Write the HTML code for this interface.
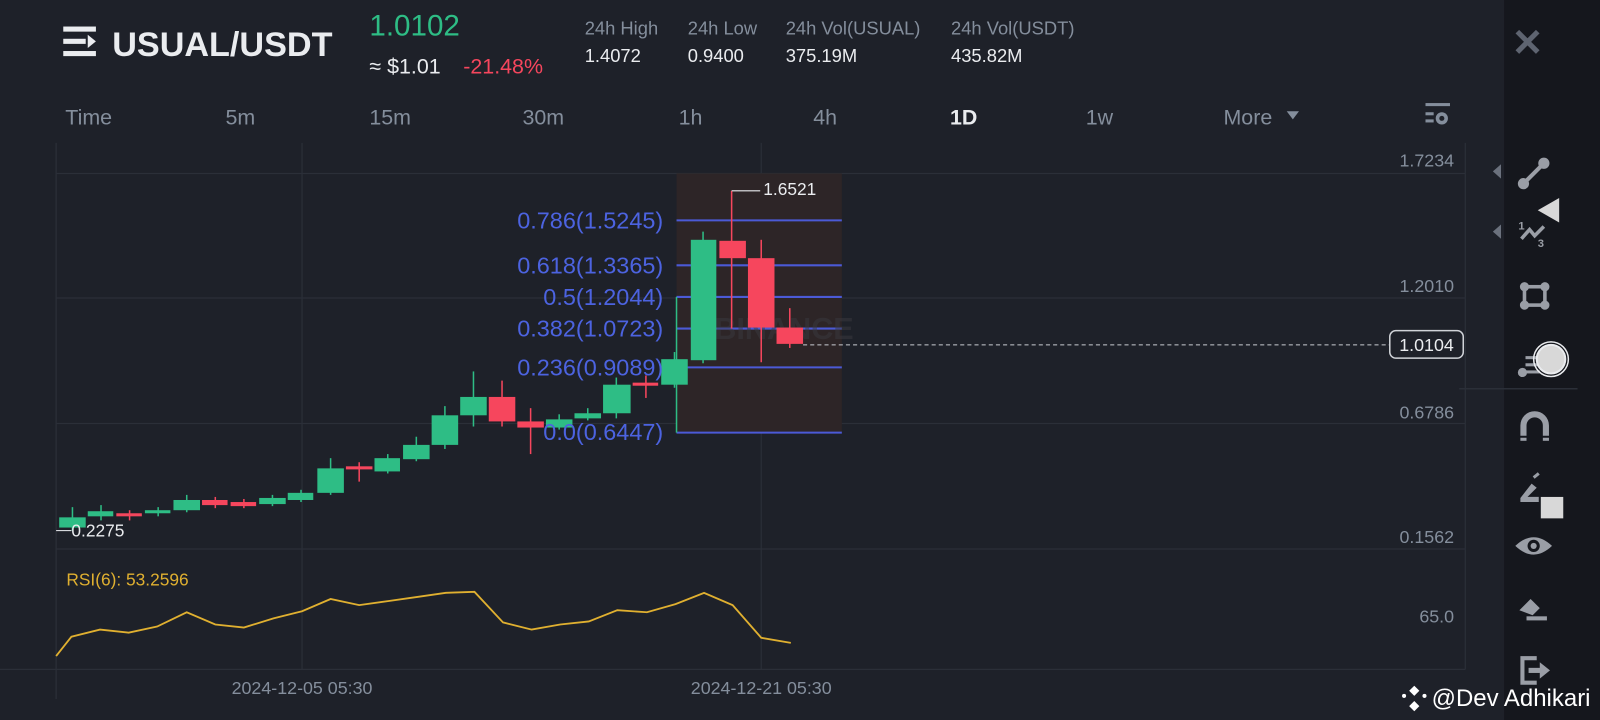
<!DOCTYPE html>
<html><head><meta charset="utf-8"><style>
html,body{margin:0;padding:0;background:#1e2129;width:1600px;height:720px;overflow:hidden}
svg{display:block}
text{font-family:"Liberation Sans",sans-serif}
</style></head><body>
<svg width="1600" height="720" viewBox="0 0 1600 720" xmlns="http://www.w3.org/2000/svg">
<rect width="1600" height="720" fill="#1e2129"/>
<g transform="scale(1.0204)">
<rect x="1474" y="0" width="120" height="720" fill="#15171d"/>
<g fill="#eaecef"><rect x="62" y="26" width="32" height="5"/><rect x="62" y="38" width="22" height="5"/><rect x="62" y="50" width="32" height="5"/><polygon points="86,34 94,40.5 86,47"/></g>
<text x="110" y="55" font-size="33.5" font-weight="bold" fill="#eaecef">USUAL/USDT</text>
<text x="362" y="35" font-size="29" fill="#2ebd85">1.0102</text>
<text x="362" y="72" font-size="21" fill="#eaecef">≈ $1.01</text>
<text x="454" y="72" font-size="21" fill="#f6465d">-21.48%</text>
<g font-size="18" fill="#848e9c"><text x="573" y="34">24h High</text><text x="674" y="34">24h Low</text><text x="770" y="34">24h Vol(USUAL)</text><text x="932" y="34">24h Vol(USDT)</text></g>
<g font-size="18" fill="#eaecef"><text x="573" y="61">1.4072</text><text x="674" y="61">0.9400</text><text x="770" y="61">375.19M</text><text x="932" y="61">435.82M</text></g>
<path d="M1487 31 L1507 51 M1507 31 L1487 51" stroke="#5e6470" stroke-width="5"/>
<g font-size="21" fill="#848e9c"><text x="64" y="122">Time</text><text x="221" y="122">5m</text><text x="362" y="122">15m</text><text x="512" y="122">30m</text><text x="665" y="122">1h</text><text x="797" y="122">4h</text><text x="1064" y="122">1w</text><text x="1199" y="122">More</text></g>
<text x="931" y="122" font-size="21" font-weight="bold" fill="#eaecef">1D</text>
<polygon points="1261,109 1273,109 1267,117" fill="#848e9c"/>
<g fill="#848e9c"><rect x="1397" y="101" width="24" height="3"/><rect x="1397" y="110" width="8" height="3"/><rect x="1397" y="117" width="8" height="3"/><circle cx="1413" cy="116" r="6"/><circle cx="1413" cy="116" r="2.5" fill="#1e2129"/></g>
<g stroke="#2b2f38" stroke-width="1.2">
<line x1="55" y1="140" x2="55" y2="685"/><line x1="296" y1="140" x2="296" y2="656"/><line x1="746" y1="140" x2="746" y2="656"/><line x1="1436" y1="140" x2="1436" y2="656"/>
<line x1="55" y1="170" x2="1436" y2="170"/><line x1="55" y1="292" x2="1436" y2="292"/><line x1="55" y1="415" x2="1436" y2="415"/><line x1="55" y1="538" x2="1436" y2="538"/><line x1="0" y1="656" x2="1436" y2="656"/>
</g>
<g font-size="17.5" fill="#848e9c" text-anchor="end"><text x="1425" y="163">1.7234</text><text x="1425" y="286">1.2010</text><text x="1425" y="410">0.6786</text><text x="1425" y="532">0.1562</text><text x="1425" y="610">65.0</text></g>
<g font-size="17.5" fill="#848e9c" text-anchor="middle"><text x="296" y="680">2024-12-05 05:30</text><text x="746" y="680">2024-12-21 05:30</text></g>
<rect x="663" y="170" width="162" height="254" fill="#2d2527"/>
<g stroke="#4b5ad6" stroke-width="2"><line x1="663" y1="216" x2="825" y2="216"/><line x1="663" y1="260" x2="825" y2="260"/><line x1="663" y1="291" x2="825" y2="291"/><line x1="663" y1="322" x2="825" y2="322"/><line x1="663" y1="360" x2="825" y2="360"/><line x1="663" y1="424" x2="825" y2="424"/></g>
<line x1="663" y1="291" x2="663" y2="424" stroke="#2ebd85" stroke-width="1.5"/>
<text x="700" y="332" font-size="30" font-weight="bold" fill="#3a3a40" opacity="0.5">BINANCE</text>
<g stroke-width="1.5">
<line x1="71" y1="497" x2="71" y2="520" stroke="#2ebd85"/><rect x="58" y="507" width="26" height="10" fill="#2ebd85"/>
<line x1="99" y1="495" x2="99" y2="510" stroke="#2ebd85"/><rect x="86" y="501" width="25" height="5" fill="#2ebd85"/>
<line x1="127" y1="500" x2="127" y2="510" stroke="#f6465d"/><rect x="114" y="503" width="25" height="3" fill="#f6465d"/>
<line x1="155" y1="497" x2="155" y2="506" stroke="#2ebd85"/><rect x="142" y="500" width="25" height="3" fill="#2ebd85"/>
<line x1="183" y1="485" x2="183" y2="502" stroke="#2ebd85"/><rect x="170" y="490" width="26" height="10" fill="#2ebd85"/>
<line x1="211" y1="487" x2="211" y2="498" stroke="#f6465d"/><rect x="198" y="490" width="25" height="5" fill="#f6465d"/>
<line x1="239" y1="489" x2="239" y2="498" stroke="#f6465d"/><rect x="226" y="492" width="25" height="4" fill="#f6465d"/>
<line x1="267" y1="485" x2="267" y2="496" stroke="#2ebd85"/><rect x="254" y="488" width="26" height="6" fill="#2ebd85"/>
<line x1="295" y1="480" x2="295" y2="492" stroke="#2ebd85"/><rect x="282" y="483" width="25" height="7" fill="#2ebd85"/>
<line x1="324" y1="449" x2="324" y2="485" stroke="#2ebd85"/><rect x="311" y="459" width="26" height="24" fill="#2ebd85"/>
<line x1="352" y1="453" x2="352" y2="472" stroke="#f6465d"/><rect x="339" y="457" width="26" height="3" fill="#f6465d"/>
<line x1="380" y1="445" x2="380" y2="464" stroke="#2ebd85"/><rect x="367" y="449" width="25" height="13" fill="#2ebd85"/>
<line x1="408" y1="428" x2="408" y2="452" stroke="#2ebd85"/><rect x="395" y="436" width="26" height="14" fill="#2ebd85"/>
<line x1="436" y1="398" x2="436" y2="440" stroke="#2ebd85"/><rect x="423" y="407" width="26" height="29" fill="#2ebd85"/>
<line x1="464" y1="364" x2="464" y2="418" stroke="#2ebd85"/><rect x="451" y="389" width="26" height="18" fill="#2ebd85"/>
<line x1="492" y1="373" x2="492" y2="418" stroke="#f6465d"/><rect x="479" y="389" width="26" height="24" fill="#f6465d"/>
<line x1="520" y1="400" x2="520" y2="445" stroke="#f6465d"/><rect x="507" y="413" width="26" height="6" fill="#f6465d"/>
<line x1="548" y1="406" x2="548" y2="421" stroke="#2ebd85"/><rect x="535" y="411" width="26" height="8" fill="#2ebd85"/>
<line x1="576" y1="400" x2="576" y2="412" stroke="#2ebd85"/><rect x="563" y="405" width="26" height="5" fill="#2ebd85"/>
<line x1="604" y1="370" x2="604" y2="410" stroke="#2ebd85"/><rect x="591" y="377" width="27" height="28" fill="#2ebd85"/>
<line x1="633" y1="368" x2="633" y2="390" stroke="#f6465d"/><rect x="620" y="375" width="25" height="3" fill="#f6465d"/>
<line x1="661" y1="345" x2="661" y2="380" stroke="#2ebd85"/><rect x="648" y="352" width="26" height="25" fill="#2ebd85"/>
<line x1="689" y1="227" x2="689" y2="356" stroke="#2ebd85"/><rect x="677" y="235" width="25" height="118" fill="#2ebd85"/>
<line x1="717" y1="187" x2="717" y2="322" stroke="#f6465d"/><rect x="705" y="236" width="26" height="17" fill="#f6465d"/>
<line x1="746" y1="235" x2="746" y2="355" stroke="#f6465d"/><rect x="733" y="253" width="26" height="68" fill="#f6465d"/>
<line x1="774" y1="302" x2="774" y2="341" stroke="#f6465d"/><rect x="761" y="321" width="26" height="16" fill="#f6465d"/>
</g>
<path d="M717 187 H745" stroke="#eaecef" stroke-width="1"/>
<text x="748" y="191" font-size="17" fill="#eaecef">1.6521</text>
<path d="M55 520 H70" stroke="#eaecef" stroke-width="1"/>
<text x="70" y="526" font-size="17" fill="#eaecef">0.2275</text>
<g font-size="23" fill="#4c63e0" text-anchor="end"><text x="650" y="224">0.786(1.5245)</text><text x="650" y="268">0.618(1.3365)</text><text x="650" y="299">0.5(1.2044)</text><text x="650" y="330">0.382(1.0723)</text><text x="650" y="368">0.236(0.9089)</text><text x="650" y="431">0.0(0.6447)</text></g>
<line x1="787" y1="338" x2="1362" y2="338" stroke="#c9ccd2" stroke-width="1" stroke-dasharray="4,3"/>
<rect x="1362" y="324" width="72" height="27" rx="6" fill="#1e2129" stroke="#d0d3d8" stroke-width="1.5"/>
<text x="1398" y="344" font-size="17.5" fill="#eaecef" text-anchor="middle">1.0104</text>
<text x="65" y="574" font-size="17" fill="#e0b030">RSI(6): 53.2596</text>
<polyline fill="none" stroke="#e0b030" stroke-width="1.8" points="55,643 70,624 98,617 126,620 154,614 183,600 211,612 239,615 268,606 296,599 324,587 352,593 381,589 409,585 437,581 465,580 493,610 521,617 549,612 577,609 605,598 634,600 662,592 690,581 718,593 746,625 775,630"/>
<g fill="#6b717d"><polygon points="1471,161 1471,175 1463,168"/><polygon points="1471,220 1471,234 1463,227"/></g>
<line x1="1430" y1="381" x2="1546" y2="381" stroke="#2b2f38" stroke-width="1.5"/>
<g fill="#9a9ea6" stroke="#9a9ea6">
<circle cx="1493" cy="180" r="5"/><circle cx="1513" cy="160" r="5"/><line x1="1493" y1="180" x2="1513" y2="160" stroke-width="4"/>
<path d="M1491 234 L1499 225 L1504 231 L1513 222" fill="none" stroke-width="3.5"/>
<text x="1488" y="225" font-size="11" font-weight="bold" stroke="none">1</text><text x="1507" y="242" font-size="11" font-weight="bold" stroke="none">3</text>
<rect x="1494" y="281" width="20" height="18" fill="none" stroke-width="3.5"/><circle cx="1494" cy="281" r="4"/><circle cx="1514" cy="281" r="4"/><circle cx="1494" cy="299" r="4"/><circle cx="1514" cy="299" r="4"/>
<circle cx="1492" cy="365" r="4"/><rect x="1495" y="349" width="14" height="3" stroke="none"/><rect x="1495" y="356" width="14" height="3" stroke="none"/><rect x="1495" y="363" width="14" height="3" stroke="none"/>
<path d="M1490 427 V417 A14 14 0 0 1 1518 417 V427 H1512 V417 A8 8 0 0 0 1496 417 V427 Z" stroke="none"/>
<rect x="1490" y="429" width="6" height="3" stroke="none"/><rect x="1512" y="429" width="6" height="3" stroke="none"/>
<path d="M1490 488 L1501 474 L1506 478 L1497 487 L1508 487 L1508 492 L1490 492 Z" stroke="none"/><path d="M1503 468 L1508 464" stroke-width="3"/>
<path d="M1485 535 Q1503 518 1521 535 Q1503 552 1485 535 Z" stroke="none"/><circle cx="1503" cy="535" r="6" fill="#15171d" stroke="none"/><circle cx="1503" cy="535" r="3" stroke="none"/>
<path d="M1489 598 L1500 587 L1509 596 L1502 603 Z" stroke="none"/><rect x="1496" y="604" width="20" height="4" stroke="none"/>
<path d="M1506 645 H1492 V669 H1506" fill="none" stroke-width="4"/><path d="M1498 657 H1511" stroke-width="5"/><polygon points="1509,649 1519,657 1509,665" stroke="none"/>
</g>
<circle cx="1520" cy="352" r="14" fill="#d8d8d8" stroke="#eaecef" stroke-width="2"/><circle cx="1520" cy="352" r="17" fill="none" stroke="#eaecef" stroke-width="1.5"/>
<polygon points="1528,194 1528,218 1507,206" fill="#d8d8d8"/>
<rect x="1510" y="487" width="22" height="21" fill="#d8d8d8"/>
<g fill="#ffffff"><path d="M1386 672 l5 5 -5 5 -5 -5Z"/><circle cx="1376" cy="682" r="2"/><circle cx="1396" cy="682" r="2"/><path d="M1386 687 l5 5 -5 5 -5 -5Z"/></g>
<text x="1403" y="692" font-size="23.5" fill="#ffffff">@Dev Adhikari</text>
</g>
</svg>
</body></html>
